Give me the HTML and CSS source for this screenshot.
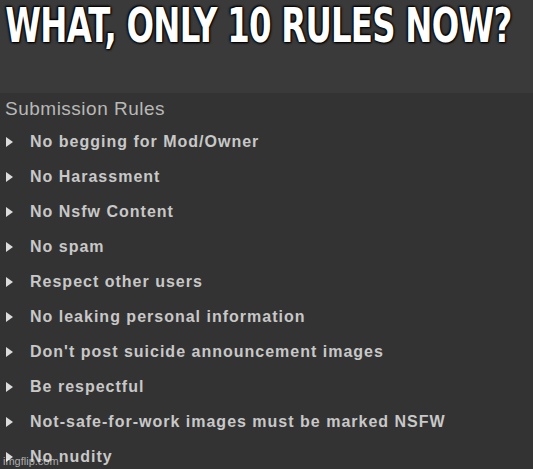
FILE: index.html
```html
<!DOCTYPE html>
<html lang="en">
<head>
  <meta charset="UTF-8">
  <title>Submission Rules</title>
  <link rel="stylesheet" href="styles.css">
</head>
<body>

  <!-- Caption -->
  <div class="caption">
    <div class="caption-text">WHAT, ONLY 10 RULES NOW?</div>
  </div>

  <!-- Rules panel -->
  <div class="rules">
    <div class="rules-title">Submission Rules</div>
    <ul class="rule-list">
      <li><span class="arrow"></span>No begging for Mod/Owner</li>
      <li><span class="arrow"></span>No Harassment</li>
      <li><span class="arrow"></span>No Nsfw Content</li>
      <li><span class="arrow"></span>No spam</li>
      <li><span class="arrow"></span>Respect other users</li>
      <li><span class="arrow"></span>No leaking personal information</li>
      <li><span class="arrow"></span>Don't post suicide announcement images</li>
      <li><span class="arrow"></span>Be respectful</li>
      <li><span class="arrow"></span>Not-safe-for-work images must be marked NSFW</li>
      <li><span class="arrow"></span>No nudity</li>
    </ul>
  </div>

  <div class="watermark">imgflip.com</div>

</body>
</html>
```
FILE: styles.css
```css
body {
  margin: 0;
  width: 533px;
  height: 469px;
  overflow: hidden;
  background-color: #333333;
  font-family: "Liberation Sans", Arial, sans-serif;
  position: relative;
}
/* Caption */
.caption {
  background-color: #3a3a3a;
  height: 93px;
  display: flex;
  justify-content: center;
  padding-right: 16px;
  overflow: hidden;
}
.caption-text {
  font-family: "DejaVu Sans Condensed", sans-serif;
  font-weight: bold;
  font-size: 48px;
  line-height: 50px;
  white-space: nowrap;
  color: white;
  transform: scaleX(0.75);
  transform-origin: top center;
  letter-spacing: -1px;
  text-shadow: 0 0 3px black, 0 0 3px black, 1px 1px 2px black, -1px -1px 2px black;
}
/* Rules */
.rules {
  padding: 5px 0 0 5px;
}
.rules-title {
  font-size: 19px;
  letter-spacing: 0.5px;
  color: #b8b8b8;
  line-height: 22px;
}
.rule-list {
  list-style: none;
  margin: 4px 0 0;
  padding: 0;
}
.rule-list li {
  display: flex;
  align-items: center;
  height: 35px;
  font-size: 16px;
  font-weight: bold;
  letter-spacing: 1px;
  color: #c8c8c8;
}
.arrow {
  width: 0;
  height: 0;
  border-top: 5px solid transparent;
  border-bottom: 5px solid transparent;
  border-left: 7px solid #dcdcdc;
  margin: 0 17px 0 1px;
}
/* imgflip mark over the last row */
.watermark {
  position: absolute;
  left: 3px;
  bottom: 2px;
  font-size: 11px;
  color: rgba(255, 255, 255, 0.6);
}
```
